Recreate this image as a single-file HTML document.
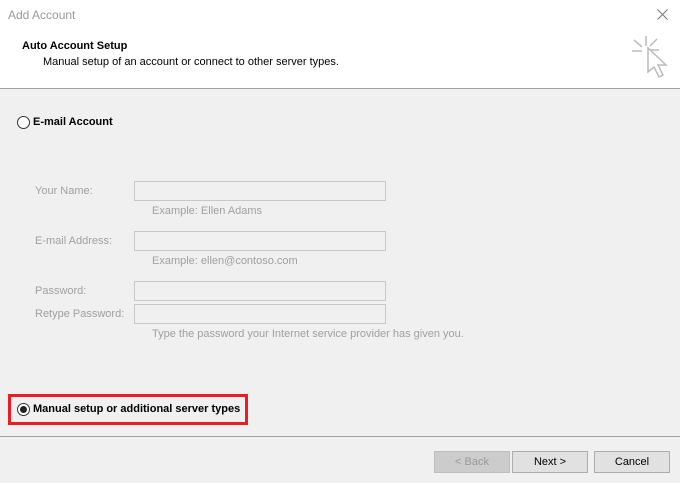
<html><head><style>
body{margin:0;width:680px;height:483px;background:#f0f0f0;font-family:"Liberation Sans",sans-serif;font-size:11px;position:relative;overflow:hidden}
.a{position:absolute;white-space:nowrap}
.hdr{position:absolute;left:0;top:0;width:680px;height:88px;background:#fff;border-bottom:1px solid #a0a0a0}
.lbl{color:#a0a0a0}
.in{position:absolute;left:134px;width:250px;height:18px;border:1px solid #c8c8c8;background:#f0f0f0}
.btn{position:absolute;top:451px;width:74px;height:20px;border:1px solid #adadad;background:#e1e1e1;text-align:center;line-height:20px;font-size:11px}
.rad{position:absolute;width:11px;height:11px;border:1px solid #333;border-radius:50%;background:#fff}
</style></head><body>
<div class="hdr"></div>
<div class="a" style="left:8px;top:8px;color:#999;font-size:12px">Add Account</div>
<svg class="a" style="left:657px;top:9px" width="11" height="11" viewBox="0 0 11 11" stroke="#777" stroke-width="1"><path d="M0.5 0.5l10 10M10.5 0.5l-10 10"/></svg>
<div class="a" style="left:22px;top:40px;font-weight:bold">Auto Account Setup</div>
<div class="a" style="left:43px;top:56px">Manual setup of an account or connect to other server types.</div>
<svg class="a" style="left:630px;top:34px" width="40" height="52" viewBox="0 0 40 52" fill="none" stroke="#bbb" stroke-width="1.5"><path d="M16 2v10M4 6l8 7M2 17h10M27 5l-7 7M29 16h-9"/><path d="M18 14l0 24 6-5 5 10 4-2-5-10 8 0z" fill="#fff"/></svg>
<div class="rad" style="left:17px;top:116px"></div>
<div class="a" style="left:33px;top:116px;font-weight:bold">E-mail Account</div>
<div class="a lbl" style="left:35px;top:185px">Your Name:</div>
<div class="in" style="top:181px"></div>
<div class="a lbl" style="left:152px;top:205px">Example: Ellen Adams</div>
<div class="a lbl" style="left:35px;top:235px">E-mail Address:</div>
<div class="in" style="top:231px"></div>
<div class="a lbl" style="left:152px;top:255px">Example: ellen@contoso.com</div>
<div class="a lbl" style="left:35px;top:285px">Password:</div>
<div class="in" style="top:281px"></div>
<div class="a lbl" style="left:35px;top:308px">Retype Password:</div>
<div class="in" style="top:304px"></div>
<div class="a lbl" style="left:152px;top:328px">Type the password your Internet service provider has given you.</div>
<div class="a" style="left:8px;top:394px;width:234px;height:25px;border:3px solid #ed1c24"></div>
<div class="rad" style="left:17px;top:403px"></div>
<div class="a" style="left:20px;top:406px;width:7px;height:7px;border-radius:50%;background:#222"></div>
<div class="a" style="left:33px;top:403px;font-weight:bold">Manual setup or additional server types</div>
<div class="a" style="left:0;top:436px;width:680px;height:1px;background:#a0a0a0"></div>
<div class="btn" style="left:434px;background:#ccc;border-color:#bfbfbf;color:#999">&lt; Back</div>
<div class="btn" style="left:512px">Next &gt;</div>
<div class="btn" style="left:594px">Cancel</div>
</body></html>
